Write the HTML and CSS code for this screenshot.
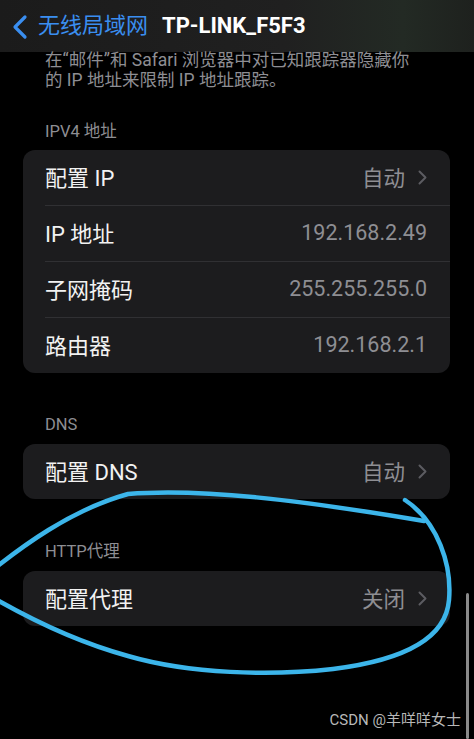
FILE: index.html
```html
<!DOCTYPE html>
<html lang="zh-CN">
<head>
<meta charset="utf-8">
<title>TP-LINK_F5F3</title>
<link rel="stylesheet" href="styles.css">
</head>
<body>
<div class="screen">
  <header class="nav">
    <div class="back">
      <svg class="back-chev" width="18" height="26" viewBox="0 0 18 26"><path d="M14 3 L4 13 L14 23" fill="none" stroke="#3a8ef0" stroke-width="3.2" stroke-linecap="round" stroke-linejoin="round"/></svg>
      <span class="back-text">无线局域网</span>
    </div>
    <span class="nav-title">TP-LINK_F5F3</span>
  </header>

  <main class="content">
    <p class="desc">在“邮件”和 Safari 浏览器中对已知跟踪器隐藏你<br>的 IP 地址来限制 IP 地址跟踪。</p>

    <div class="section-label s-ipv4">IPV4 地址</div>
    <div class="card">
      <div class="row"><span class="row-label">配置 IP</span><span class="row-value">自动<svg class="chev" width="9" height="15" viewBox="0 0 9 15"><path d="M1.5 1.5 L7.5 7.5 L1.5 13.5" fill="none" stroke="#5c5c61" stroke-width="2" stroke-linecap="round" stroke-linejoin="round"/></svg></span></div>
      <div class="sep"></div>
      <div class="row"><span class="row-label">IP 地址</span><span class="row-value plain">192.168.2.49</span></div>
      <div class="sep"></div>
      <div class="row"><span class="row-label">子网掩码</span><span class="row-value plain">255.255.255.0</span></div>
      <div class="sep"></div>
      <div class="row"><span class="row-label">路由器</span><span class="row-value plain">192.168.2.1</span></div>
    </div>

    <div class="section-label s-dns">DNS</div>
    <div class="card">
      <div class="row"><span class="row-label">配置 DNS</span><span class="row-value">自动<svg class="chev" width="9" height="15" viewBox="0 0 9 15"><path d="M1.5 1.5 L7.5 7.5 L1.5 13.5" fill="none" stroke="#5c5c61" stroke-width="2" stroke-linecap="round" stroke-linejoin="round"/></svg></span></div>
    </div>

    <div class="section-label s-http">HTTP代理</div>
    <div class="card">
      <div class="row"><span class="row-label">配置代理</span><span class="row-value">关闭<svg class="chev" width="9" height="15" viewBox="0 0 9 15"><path d="M1.5 1.5 L7.5 7.5 L1.5 13.5" fill="none" stroke="#5c5c61" stroke-width="2" stroke-linecap="round" stroke-linejoin="round"/></svg></span></div>
    </div>
  </main>

  <div class="scrollbar"></div>
  <div class="watermark">CSDN @羊咩咩女士</div>

  <svg class="annotation" width="474" height="739" viewBox="0 0 474 739">
    <path d="M405 500 C 438 522, 452 565, 449 600 C 446 638, 405 660, 333 669 C 270 676, 190 674, 128 656 C 80 643, 35 622, -10 596" fill="none" stroke="#3cb5ea" stroke-width="4.5" stroke-linecap="round"/>
    <path d="M-10 572 C 20 548, 70 510, 128 494 C 200 488, 300 500, 424 521" fill="none" stroke="#3cb5ea" stroke-width="4.5" stroke-linecap="round"/>
  </svg>
</div>
</body>
</html>
```

FILE: styles.css
```css
* { box-sizing: border-box; }
html, body {
  margin: 0;
  padding: 0;
  background: #000;
}
body {
  font-family: "Roboto", "Noto Sans CJK SC", sans-serif;
  color: #fff;
}
.screen {
  position: relative;
  width: 474px;
  height: 739px;
  overflow: hidden;
  background: #000;
}
.nav {
  height: 52px;
  display: flex;
  align-items: center;
  padding-left: 11px;
  gap: 14px;
  background: linear-gradient(90deg, #1b1b1b 0%, #202020 60%, #232a24 85%, #1e211e 100%);
}
.back {
  display: flex;
  align-items: center;
  gap: 9px;
}
.back-chev { display: block; margin-top: 1px; }
.back-text {
  color: #3a8ef0;
  font-size: 22px;
  line-height: 26px;
}
.nav-title {
  font-size: 22px;
  font-weight: 700;
  line-height: 26px;
  color: #fff;
}
.content {
  padding: 0 24px 0 23px;
}
.desc {
  margin: -2px 0 0;
  padding-left: 22px;
  font-size: 17.5px;
  line-height: 20px;
  color: #8e8e93;
}
.section-label {
  padding-left: 22px;
  font-size: 16.5px;
  line-height: 20px;
  color: #8e8e93;
}
.s-ipv4 { margin-top: 32px; margin-bottom: 8px; }
.s-dns { margin-top: 42px; margin-bottom: 9px; }
.s-http { margin-top: 43px; margin-bottom: 9px; }
.card {
  background: #1c1c1e;
  border-radius: 12px;
  padding-left: 22px;
}
.row {
  height: 55px;
  display: flex;
  align-items: center;
  justify-content: space-between;
  padding-right: 23px;
  padding-bottom: 3px;
}
.row-label {
  font-size: 22px;
  color: #f2f2f2;
}
.row-value {
  display: flex;
  align-items: center;
  gap: 13px;
  font-size: 21.5px;
  color: #8e8e93;
}
.chev { display: block; margin-top: 2px; }
.sep {
  height: 1px;
  background: #303033;
}
.scrollbar {
  position: absolute;
  left: 466px;
  top: 593px;
  width: 3px;
  height: 146px;
  border-radius: 2px;
  background: #8a8a8a;
}
.watermark {
  position: absolute;
  right: 13px;
  top: 710px;
  font-size: 15px;
  line-height: 20px;
  color: #b8b8b8;
}
.annotation {
  position: absolute;
  left: 0;
  top: 0;
  pointer-events: none;
}
```
